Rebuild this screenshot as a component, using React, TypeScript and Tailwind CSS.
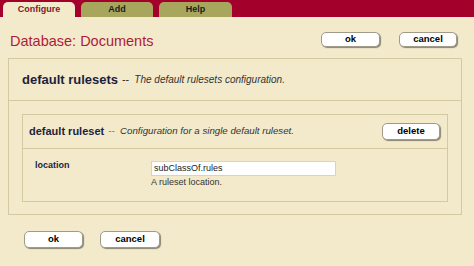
export default function App() {
    const btn =
        "bg-white border border-[#a09a88] rounded-[5px] shadow-[1px_1px_1px_#8a8470] text-[9.5px] font-bold text-black flex items-center justify-center";

    return (
        <div className="w-[474px] h-[266px] bg-[#f2eacb] font-['Liberation_Sans',Arial,sans-serif] overflow-hidden">
            {/* tab strip */}
            <div className="h-[17px] bg-[#a3002c] flex items-end pl-[3px] gap-[6px] text-[9px] font-bold">
                <div className="w-[72px] h-[15px] bg-[#f2eacb] rounded-t-[5px] flex items-center justify-center text-[#7c1a2c]">Configure</div>
                <div className="w-[72px] h-[15px] bg-[#a8a65c] rounded-t-[5px] flex items-center justify-center text-[#1c1c1c]">Add</div>
                <div className="w-[73px] h-[15px] bg-[#a8a65c] rounded-t-[5px] flex items-center justify-center text-[#1c1c1c]">Help</div>
            </div>

            {/* title row */}
            <div className="flex items-start justify-between pl-[10px] pr-[17px] h-[41px]">
                <h1 className="text-[14.5px] text-[#b01a3a] leading-none mt-[17px]">Database: Documents</h1>
                <div className="flex gap-[19px] mt-[15px]">
                    <button className={btn + " w-[59px] h-[15px]"}>ok</button>
                    <button className={btn + " w-[58px] h-[15px]"}>cancel</button>
                </div>
            </div>

            {/* default rulesets panel */}
            <div className="ml-[8px] w-[454px] border border-[#d3caa2]">
                <div className="h-[42px] flex items-center px-[13px] gap-[4px] border-b border-[#d3caa2]">
                    <span className="text-[13px] font-bold text-[#1e1e3c]">default rulesets</span>
                    <span className="text-[10px] italic text-[#333]">-- &nbsp;The default rulesets configuration.</span>
                </div>
                <div className="px-[13px] pt-[13px] pb-[12px]">
                    <div className="border border-[#d3caa2]">
                        <div className="h-[34px] flex items-center justify-between pl-[6px] pr-[7px] border-b border-[#d3caa2]">
                            <div className="flex items-center gap-[4px]">
                                <span className="text-[11px] font-bold text-[#1e1e3c]">default ruleset</span>
                                <span className="text-[9.7px] italic text-[#333]">-- &nbsp;Configuration for a single default ruleset.</span>
                            </div>
                            <button className={btn + " w-[58px] h-[17px]"}>delete</button>
                        </div>
                        <div className="flex pl-[12px] pt-[12px] pb-[13px]">
                            <div className="w-[116px] text-[9px] font-bold text-[#1e1e3c] leading-[11px] -mt-[1px]">location</div>
                            <div className="flex flex-col">
                                <div className="w-[185px] h-[15px] bg-white border border-[#d8d4c4] text-[9px] text-[#222] px-[2px] flex items-center">subClassOf.rules</div>
                                <div className="text-[9px] text-[#333] leading-[11px] mt-[1px]">A ruleset location.</div>
                            </div>
                        </div>
                    </div>
                </div>
            </div>

            {/* bottom buttons */}
            <div className="flex gap-[17px] pl-[24px] pt-[16px]">
                <button className={btn + " w-[59px] h-[17px]"}>ok</button>
                <button className={btn + " w-[60px] h-[17px]"}>cancel</button>
            </div>
        </div>
    )
}
